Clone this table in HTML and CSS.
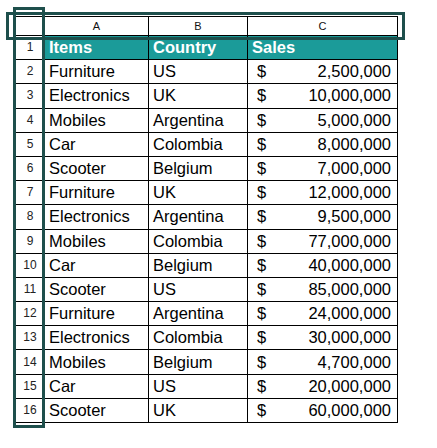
FILE: index.html
```html
<!DOCTYPE html>
<html>
<head>
<meta charset="utf-8">
<link rel="stylesheet" href="styles.css">
</head>
<body>
<div class="sheet">
  <table class="grid">
    <colgroup>
      <col class="c-rh"><col class="c-a"><col class="c-b"><col class="c-c">
    </colgroup>
    <tr class="colhead"><th class="corner"></th><th>A</th><th>B</th><th>C</th></tr>
    <tr class="titles"><td class="rh">1</td><td class="t">Items</td><td class="t">Country</td><td class="t">Sales</td></tr>
    <tr><td class="rh">2</td><td>Furniture</td><td>US</td><td class="money"><div class="m"><span>$</span><span>2,500,000</span></div></td></tr>
    <tr><td class="rh">3</td><td>Electronics</td><td>UK</td><td class="money"><div class="m"><span>$</span><span>10,000,000</span></div></td></tr>
    <tr><td class="rh">4</td><td>Mobiles</td><td>Argentina</td><td class="money"><div class="m"><span>$</span><span>5,000,000</span></div></td></tr>
    <tr><td class="rh">5</td><td>Car</td><td>Colombia</td><td class="money"><div class="m"><span>$</span><span>8,000,000</span></div></td></tr>
    <tr><td class="rh">6</td><td>Scooter</td><td>Belgium</td><td class="money"><div class="m"><span>$</span><span>7,000,000</span></div></td></tr>
    <tr><td class="rh">7</td><td>Furniture</td><td>UK</td><td class="money"><div class="m"><span>$</span><span>12,000,000</span></div></td></tr>
    <tr><td class="rh">8</td><td>Electronics</td><td>Argentina</td><td class="money"><div class="m"><span>$</span><span>9,500,000</span></div></td></tr>
    <tr><td class="rh">9</td><td>Mobiles</td><td>Colombia</td><td class="money"><div class="m"><span>$</span><span>77,000,000</span></div></td></tr>
    <tr><td class="rh">10</td><td>Car</td><td>Belgium</td><td class="money"><div class="m"><span>$</span><span>40,000,000</span></div></td></tr>
    <tr><td class="rh">11</td><td>Scooter</td><td>US</td><td class="money"><div class="m"><span>$</span><span>85,000,000</span></div></td></tr>
    <tr><td class="rh">12</td><td>Furniture</td><td>Argentina</td><td class="money"><div class="m"><span>$</span><span>24,000,000</span></div></td></tr>
    <tr><td class="rh">13</td><td>Electronics</td><td>Colombia</td><td class="money"><div class="m"><span>$</span><span>30,000,000</span></div></td></tr>
    <tr><td class="rh">14</td><td>Mobiles</td><td>Belgium</td><td class="money"><div class="m"><span>$</span><span>4,700,000</span></div></td></tr>
    <tr><td class="rh">15</td><td>Car</td><td>US</td><td class="money"><div class="m"><span>$</span><span>20,000,000</span></div></td></tr>
    <tr><td class="rh">16</td><td>Scooter</td><td>UK</td><td class="money"><div class="m"><span>$</span><span>60,000,000</span></div></td></tr>
  </table>
  <div class="frame frame-rows"></div>
  <div class="frame frame-cols"></div>
</div>
</body>
</html>
```

FILE: styles.css
```css
html, body {
  margin: 0;
  padding: 0;
  background: #ffffff;
}

.sheet {
  position: relative;
  width: 437px;
  height: 448px;
  padding: 16px 0 0 15px;
  box-sizing: border-box;
  font-family: "Liberation Sans", Arial, sans-serif;
  color: #000;
}

.grid {
  border-collapse: collapse;
  table-layout: fixed;
  width: 383px;
}

.c-rh { width: 29px; }
.c-a { width: 104px; }
.c-b { width: 99px; }
.c-c { width: 150px; }

.grid th,
.grid td {
  border: 1px solid #000;
  padding: 0 4px;
  white-space: nowrap;
  overflow: hidden;
}

.colhead th {
  height: 18px;
  font-weight: normal;
  font-size: 11px;
  text-align: center;
  padding: 0;
  color: #111;
}

.grid td {
  height: 23.2px;
  font-size: 16.5px;
  line-height: 19px;
  vertical-align: middle;
}

.grid td.rh {
  font-size: 12px;
  text-align: center;
  padding: 0;
  color: #222;
}

.titles td.t {
  background: #1b9b99;
  color: #ffffff;
  font-weight: bold;
}

.grid td.money {
  padding: 0 6px 0 9px;
}

.m {
  display: flex;
  justify-content: space-between;
}

.frame {
  position: absolute;
  border: 3px solid #1e4f4c;
  box-sizing: border-box;
}

.frame-rows {
  left: 13px;
  top: 7px;
  width: 32px;
  height: 421px;
}

.frame-cols {
  left: 6px;
  top: 12px;
  width: 399px;
  height: 28px;
}
```
